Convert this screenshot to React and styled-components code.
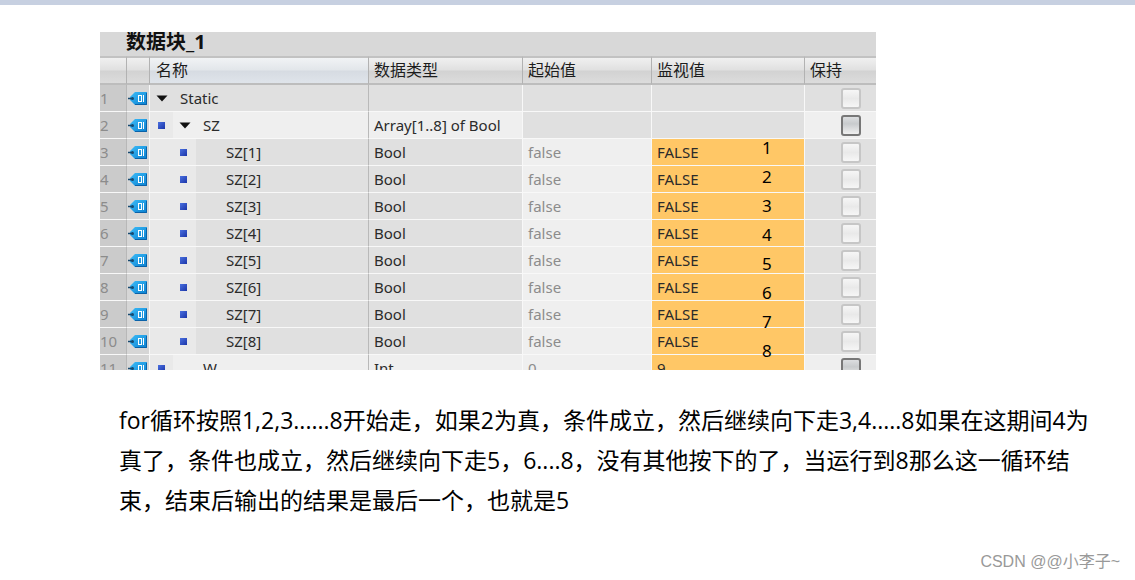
import React from "react";
import styled, { createGlobalStyle, ThemeProvider } from "styled-components";

const theme = {
  ink: "#2b2b2b",
  muted: "#8c8c8c",
  cell: "#e0e0e0",
  cellLight: "#efefef",
  line: "#f8f8f8",
  monitor: "#ffc766",
  latin: '"Open Sans", "Noto Sans", "Noto Sans CJK SC", sans-serif',
  ui: '"Noto Sans", "Noto Sans CJK SC", sans-serif',
};

const GlobalStyle = createGlobalStyle`
  * {
    box-sizing: border-box;
  }
  body {
    margin: 0;
    background-color: #ffffff;
  }
`;

const StyledPage = styled.div`
  min-height: 100vh;
  display: flex;
  flex-direction: column;
  border-top: 5px solid #c7d0e1;
  font-family: ${({ theme }) => theme.ui};
`;

const StyledContent = styled.main`
  flex: 1;
  padding: 27px 40px 0 100px;
`;

const StyledBlock = styled.section`
  position: relative;
  max-width: 776px;
  height: 338px;
  overflow: hidden;
  background-color: #d8d8d8;
`;

const StyledTitle = styled.h1`
  margin: 0;
  padding-left: 26px;
  height: 24px;
  font-size: 20px;
  line-height: 20px;
  font-weight: 700;
  color: #111111;
`;

const StyledTable = styled.table`
  width: 100%;
  table-layout: fixed;
  border-collapse: separate;
  border-spacing: 0;
  font-size: 15px;
  line-height: 20px;
  color: ${({ theme }) => theme.ink};
`;

const StyledCol = styled.col`
  width: ${({ $width }) => $width};
`;

const StyledHeadCell = styled.th`
  height: 29px;
  padding: 0 0 1px ${({ $sorted }) => ($sorted ? "6px" : "5px")};
  border-top: 2px solid #c2c2c2;
  border-bottom: 2px solid #bdbdbd;
  border-right: 1px solid #b2b2b2;
  background-image: ${({ $sorted }) =>
    $sorted
      ? "linear-gradient(#f1f3f5 0%, #e2e6ea 48%, #d6dbe2 52%, #dfe4ea 100%)"
      : "linear-gradient(#f0f0f0 0%, #e0e0e0 48%, #d2d2d2 52%, #dcdcdc 100%)"};
  font-size: 16px;
  font-weight: 400;
  text-align: left;
  white-space: nowrap;
  color: #1c1c1c;

  &:last-child {
    border-right: none;
  }
`;

const StyledCell = styled.td`
  height: 27px;
  padding: 0 0 0 5px;
  border-right: 1px solid ${({ theme }) => theme.line};
  border-bottom: 1px solid ${({ theme }) => theme.line};
  background-color: ${({ theme, $light }) =>
    $light ? theme.cellLight : theme.cell};
  white-space: nowrap;

  &:last-child {
    border-right: none;
  }
`;

const StyledNumberCell = styled(StyledCell)`
  padding: 0;
  border-right-color: #b8b8b8;
  background-color: #cbcbcb;
  color: ${({ theme }) => theme.muted};
`;

const StyledIconCell = styled(StyledCell)`
  padding: 0 0 0 1px;
  background-color: #d6d6d6;
`;

const StyledNameCell = styled(StyledCell)`
  padding: 0;
  border-right: 1px solid #b9b9b9;
`;

const StyledStartCell = styled(StyledCell)`
  color: ${({ theme }) => theme.muted};
`;

const StyledMonitorCell = styled(StyledCell)`
  background-color: ${({ theme, $filled }) =>
    $filled ? theme.monitor : theme.cell};
`;

const StyledKeepCell = styled(StyledCell)`
  padding: 0 10px 0 30px;
  text-align: center;
`;

const StyledTree = styled.div`
  display: flex;
  align-items: center;
  height: 26px;
`;

const StyledIndent = styled.span`
  display: flex;
  align-items: center;
  justify-content: center;
  align-self: stretch;
  width: 23px;
  padding-right: ${({ $nested }) => ($nested ? "2px" : "0")};
  background-color: #e9e9e9;
`;

const StyledArrowSlot = styled.span`
  display: flex;
  justify-content: center;
  width: 24px;
  margin-right: 6px;
`;

const StyledBullet = styled.span`
  width: 7px;
  height: 7px;
  background-image: linear-gradient(135deg, #4a70e0, #1b35a8);
`;

const StyledCheckbox = styled.input`
  appearance: none;
  display: block;
  width: 20px;
  height: 21px;
  margin: 0 auto;
  border: 2px solid #777777;
  border-radius: 3px;
  background-image: linear-gradient(#dcdee0, #c8cbcd 40%, #f0f0f0);

  &:disabled {
    border-color: #c6c6c6;
    background-image: linear-gradient(#f6f6f6, #e9e9e9 50%, #f6f6f6);
  }
`;

const StyledSteps = styled.ol`
  position: absolute;
  top: 101px;
  left: 662px;
  margin: 0;
  padding: 0;
  list-style: none;
  font-size: 17px;
  line-height: 29px;
  color: #000000;
`;

const StyledParagraph = styled.p`
  max-width: 976px;
  margin: 30px 0 0 19px;
  font-family: ${({ theme }) => theme.latin};
  font-size: 23px;
  line-height: 40px;
  color: #000000;
`;

const StyledFooter = styled.footer`
  padding: 0 15px 6px 0;
  font-family: "Liberation Sans", "Noto Sans CJK SC", sans-serif;
  font-size: 16px;
  line-height: 24px;
  text-align: right;
  color: #999999;
`;

const TagIcon = () => (
  <svg width="20" height="15" viewBox="0 0 20 15" aria-hidden="true">
    <defs>
      <linearGradient id="tag" x1="0" y1="0" x2="1" y2="1">
        <stop offset="0" stopColor="#3cbcf8" />
        <stop offset="1" stopColor="#0a80d0" />
      </linearGradient>
    </defs>
    <path d="M7 1H19V14H7L2 9V6Z" fill="url(#tag)" />
    <path d="M7 13.5H18.5V2" fill="none" stroke="#0b62a8" />
    <path d="M0 7.5H5" stroke="#174a70" strokeWidth="1.5" />
    <circle cx="4.5" cy="7.5" r="1.5" fill="#174a70" />
    <rect x="10.5" y="4.5" width="3" height="6" fill="none" stroke="#ffffff" />
    <path d="M15.5 4V11" stroke="#ffffff" />
  </svg>
);

const ArrowIcon = () => (
  <svg width="12" height="7" viewBox="0 0 12 7" aria-hidden="true">
    <path d="M0.5 0.5H11.5L6 6.5Z" fill="#111111" />
  </svg>
);

const elements = [1, 2, 3, 4, 5, 6, 7, 8];

const rows = [
  { name: "Static", level: 0, open: true },
  { name: "SZ", level: 1, open: true, type: "Array[1..8] of Bool", editable: true },
  ...elements.map((n) => ({
    name: `SZ[${n}]`,
    level: 2,
    type: "Bool",
    start: "false",
    value: "FALSE",
  })),
  { name: "W", level: 1, type: "Int", start: "0", value: "9", editable: true },
];

const VariableRow = ({ row, number }) => (
  <tr>
    <StyledNumberCell>{number}</StyledNumberCell>
    <StyledIconCell>
      <StyledTree>
        <TagIcon />
      </StyledTree>
    </StyledIconCell>
    <StyledNameCell $light={row.editable}>
      <StyledTree>
        {row.level === 2 && <StyledIndent />}
        {row.level > 0 && (
          <StyledIndent $nested={row.level === 2}>
            <StyledBullet />
          </StyledIndent>
        )}
        <StyledArrowSlot>{row.open && <ArrowIcon />}</StyledArrowSlot>
        {row.name}
      </StyledTree>
    </StyledNameCell>
    <StyledCell $light={row.editable}>{row.type}</StyledCell>
    <StyledStartCell $light={Boolean(row.start)}>{row.start}</StyledStartCell>
    <StyledMonitorCell $filled={Boolean(row.value)}>
      {row.value}
    </StyledMonitorCell>
    <StyledKeepCell $light={row.editable}>
      <StyledCheckbox
        type="checkbox"
        aria-label={`保持 ${row.name}`}
        disabled={!row.editable}
      />
    </StyledKeepCell>
  </tr>
);

const App = () => (
  <ThemeProvider theme={theme}>
    <GlobalStyle />
    <StyledPage lang="zh-CN">
      <StyledContent>
        <StyledBlock>
          <StyledTitle>数据块_1</StyledTitle>
          <StyledTable>
            <colgroup>
              <StyledCol $width="27px" />
              <StyledCol $width="23px" />
              <StyledCol $width="219px" />
              <StyledCol $width="154px" />
              <StyledCol $width="129px" />
              <StyledCol $width="153px" />
              <StyledCol $width="auto" />
            </colgroup>
            <thead>
              <tr>
                <StyledHeadCell />
                <StyledHeadCell />
                <StyledHeadCell $sorted>名称</StyledHeadCell>
                <StyledHeadCell>数据类型</StyledHeadCell>
                <StyledHeadCell>起始值</StyledHeadCell>
                <StyledHeadCell>监视值</StyledHeadCell>
                <StyledHeadCell>保持</StyledHeadCell>
              </tr>
            </thead>
            <tbody>
              {rows.map((row, index) => (
                <VariableRow key={row.name} row={row} number={index + 1} />
              ))}
            </tbody>
          </StyledTable>
          <StyledSteps>
            {elements.map((n) => (
              <li key={n}>{n}</li>
            ))}
          </StyledSteps>
        </StyledBlock>
        <StyledParagraph>
          for循环按照1,2,3......8开始走，如果2为真，条件成立，然后继续向下走3,4.....8如果在这期间4为真了，条件也成立，然后继续向下走5，6....8，没有其他按下的了，当运行到8那么这一循环结束，结束后输出的结果是最后一个，也就是5
        </StyledParagraph>
      </StyledContent>
      <StyledFooter>CSDN @@小李子~</StyledFooter>
    </StyledPage>
  </ThemeProvider>
);

export default App;
